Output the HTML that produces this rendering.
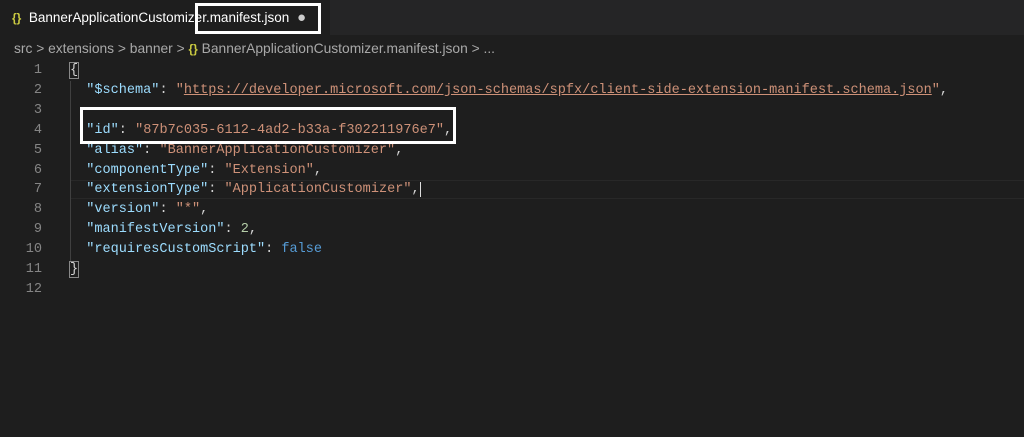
<!DOCTYPE html>
<html><head><style>
body{margin:0;width:1024px;height:437px;background:#1e1e1e;overflow:hidden;font-family:"Liberation Sans",sans-serif;position:relative}
.tabbar{position:absolute;left:0;top:0;width:1024px;height:35px;background:#252526}
.tab{position:absolute;left:0;top:0;width:330px;height:35px;background:#1e1e1e;color:#fff;font-size:13.5px;line-height:35px}
.bc{position:absolute;left:14px;top:40px;color:#a9a9a9;font-size:13.8px;line-height:18px;white-space:pre}
.y{color:#cbcb41;font-weight:bold;font-size:12px}
.code{position:absolute;top:61px;left:0;font-family:"Liberation Mono",monospace;font-size:13.55px;line-height:19.9px;white-space:pre}
.ln{position:absolute;left:0;width:42px;text-align:right;color:#858585}
.tx{position:absolute;left:70px;color:#d4d4d4}
.k{color:#9cdcfe}.s{color:#ce9178}.n{color:#b5cea8}.b{color:#569cd6}.u{text-decoration:underline}
.box{position:absolute;border:3px solid #fff;box-sizing:border-box}
</style></head><body>
<div class="tabbar"><div class="tab"><span class="y" style="margin-left:12px">{}</span>&nbsp; BannerApplicationCustomizer.manifest.json <span style="color:#ccc;font-size:15px;margin-left:4px">●</span></div></div>
<div class="bc">src &gt; extensions &gt; banner &gt; <span class="y">{}</span> BannerApplicationCustomizer.manifest.json &gt; ...</div>
<div style="position:absolute;left:70px;top:180px;width:954px;height:19px;border-top:1px solid #282828;border-bottom:1px solid #282828;box-sizing:border-box"></div>
<div style="position:absolute;left:70px;top:81px;width:1px;height:180px;background:#404040"></div>
<div class="code">
<div class="ln" style="top:0">1</div><div class="tx" style="top:0"><span style="outline:1px solid #888">{</span></div>
<div class="ln" style="top:19.9px">2</div><div class="tx" style="top:19.9px">  <span class="k">"$schema"</span>: <span class="s">"<span class="u">https://developer.microsoft.com/json-schemas/spfx/client-side-extension-manifest.schema.json</span>"</span>,</div>
<div class="ln" style="top:39.8px">3</div>
<div class="ln" style="top:59.7px">4</div><div class="tx" style="top:59.7px">  <span class="k">"id"</span>: <span class="s">"87b7c035-6112-4ad2-b33a-f302211976e7"</span>,</div>
<div class="ln" style="top:79.6px">5</div><div class="tx" style="top:79.6px">  <span class="k">"alias"</span>: <span class="s">"BannerApplicationCustomizer"</span>,</div>
<div class="ln" style="top:99.5px">6</div><div class="tx" style="top:99.5px">  <span class="k">"componentType"</span>: <span class="s">"Extension"</span>,</div>
<div class="ln" style="top:119.4px">7</div><div class="tx" style="top:119.4px">  <span class="k">"extensionType"</span>: <span class="s">"ApplicationCustomizer"</span>,<span style="border-left:1px solid #ddd"></span></div>
<div class="ln" style="top:139.3px">8</div><div class="tx" style="top:139.3px">  <span class="k">"version"</span>: <span class="s">"*"</span>,</div>
<div class="ln" style="top:159.2px">9</div><div class="tx" style="top:159.2px">  <span class="k">"manifestVersion"</span>: <span class="n">2</span>,</div>
<div class="ln" style="top:179.1px">10</div><div class="tx" style="top:179.1px">  <span class="k">"requiresCustomScript"</span>: <span class="b">false</span></div>
<div class="ln" style="top:199px">11</div><div class="tx" style="top:199px"><span style="outline:1px solid #888">}</span></div>
<div class="ln" style="top:218.9px">12</div>
</div>
<div class="box" style="left:195px;top:3px;width:126px;height:31px"></div>
<div class="box" style="left:80px;top:107px;width:376px;height:37px"></div>
</body></html>
